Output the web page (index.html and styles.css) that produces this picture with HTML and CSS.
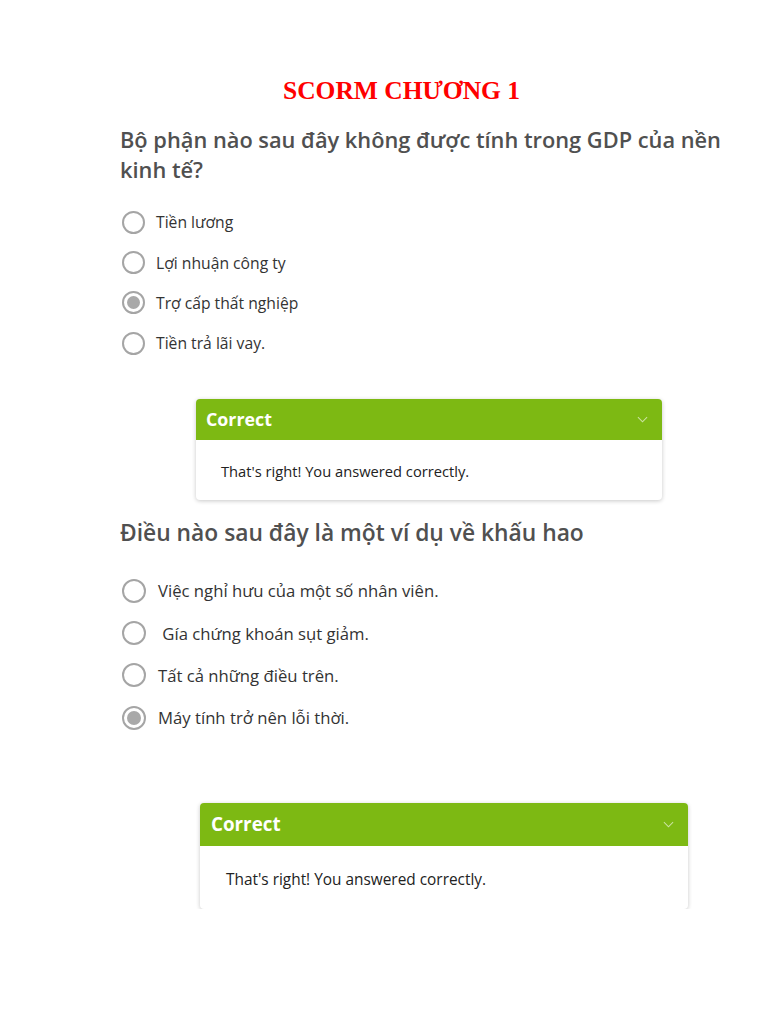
FILE: index.html
```html
<!DOCTYPE html>
<html lang="vi">
<head>
<meta charset="utf-8">
<title>SCORM CHƯƠNG 1</title>
<link rel="stylesheet" href="styles.css">
</head>
<body>
<main class="page">
  <h1 class="title">SCORM CHƯƠNG 1</h1>

  <section class="quiz q1">
    <h2 class="question">Bộ phận nào sau đây không được tính trong GDP của nền kinh tế?</h2>
    <ul class="options">
      <li class="option"><span class="radio"></span><span class="label">Tiền lương</span></li>
      <li class="option"><span class="radio"></span><span class="label">Lợi nhuận công ty</span></li>
      <li class="option"><span class="radio checked"></span><span class="label">Trợ cấp thất nghiệp</span></li>
      <li class="option"><span class="radio"></span><span class="label">Tiền trả lãi vay.</span></li>
    </ul>
    <div class="feedback fb1">
      <div class="fb-head"><span class="fb-title">Correct</span><span class="chev"></span></div>
      <div class="fb-body">That's right! You answered correctly.</div>
    </div>
  </section>

  <section class="quiz q2">
    <h2 class="question">Điều nào sau đây là một ví dụ về khấu hao</h2>
    <ul class="options">
      <li class="option"><span class="radio"></span><span class="label">Việc nghỉ hưu của một số nhân viên.</span></li>
      <li class="option"><span class="radio"></span><span class="label">&nbsp;Gía chứng khoán sụt giảm.</span></li>
      <li class="option"><span class="radio"></span><span class="label">Tất cả những điều trên.</span></li>
      <li class="option"><span class="radio checked"></span><span class="label">Máy tính trở nên lỗi thời.</span></li>
    </ul>
    <div class="feedback fb2">
      <div class="fb-head"><span class="fb-title">Correct</span><span class="chev"></span></div>
      <div class="fb-body">That's right! You answered correctly.</div>
    </div>
  </section>
</main>
</body>
</html>
```

FILE: styles.css
```css
* { box-sizing: border-box; }
html, body { margin: 0; padding: 0; background: #fff; }
body { font-family: "Open Sans", "Noto Sans", sans-serif; color: #333; }

.page {
  width: 768px;
  padding: 77px 0 0 120px;
}

.title {
  margin: 0 0 20px -120px;
  padding-left: 35px;
  font-family: "Liberation Serif", "Times New Roman", serif;
  font-weight: bold;
  font-size: 25.5px;
  line-height: 28px;
  color: #ff0000;
  text-align: center;
}

.question {
  margin: 0;
  font-size: 21.8px;
  line-height: 30px;
  font-weight: 600;
  color: #505050;
  width: 620px;
}

.options {
  list-style: none;
  margin: 0;
  padding: 0;
}

.option {
  display: flex;
  align-items: center;
  height: 40.4px;
  font-size: 15.7px;
  color: #333;
}

.radio {
  flex: none;
  width: 23px;
  height: 23px;
  border: 2px solid #a5a5a5;
  border-radius: 50%;
  margin-left: 2px;
  margin-right: 11px;
  background: #fff;
  display: flex;
  align-items: center;
  justify-content: center;
}

.radio.checked::after {
  content: "";
  width: 13px;
  height: 13px;
  border-radius: 50%;
  background: #a9a9a9;
}

.q1 .question { margin-bottom: 17px; }

.feedback {
  background: #fff;
  border-radius: 4px;
  box-shadow: 0 1px 4px rgba(0,0,0,0.22);
  overflow: hidden;
}

.fb-head {
  background: #7db913;
  display: flex;
  align-items: center;
  justify-content: space-between;
  padding: 0 16px 0 10px;
}

.fb-title {
  color: #fff;
  font-weight: 700;
  font-size: 17.8px;
}

.chev {
  width: 7px;
  height: 7px;
  border-right: 1px solid rgba(255,255,255,0.6);
  border-bottom: 1px solid rgba(255,255,255,0.6);
  transform: rotate(45deg);
  margin-top: -4px;
}

.fb-body {
  color: #222;
  font-size: 14.7px;
}

.fb1 {
  margin: 35px 0 18px 76px;
  width: 466px;
}
.fb1 .fb-head { height: 41px; }
.fb1 .fb-body { padding: 21px 25px 18px 25px; height: 60px; }

.q2 .question { margin-bottom: 22px; font-size: 22.8px; }
.q2 .option { height: 42.3px; font-size: 16.7px; }
.q2 .radio { width: 24px; height: 24px; margin-right: 12px; }
.q2 .radio.checked::after { width: 14px; height: 14px; }

.fb2 {
  margin: 64px 0 0 80px;
  width: 488px;
}
.fb2 .fb-head { height: 43px; padding-left: 11px; }
.fb2 .fb-title { font-size: 18.8px; }
.fb2 .fb-body { padding: 23px 26px 20px 26px; height: 63px; font-size: 15.4px; }
```
